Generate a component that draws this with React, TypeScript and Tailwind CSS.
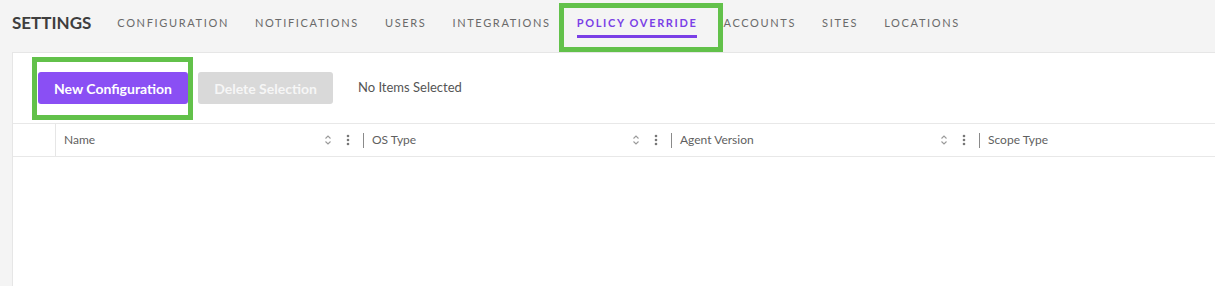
const tabs = [
  "CONFIGURATION",
  "NOTIFICATIONS",
  "USERS",
  "INTEGRATIONS",
  "POLICY OVERRIDE",
  "ACCOUNTS",
  "SITES",
  "LOCATIONS",
];

const columns = ["Name", "OS Type", "Agent Version", "Scope Type"];

const SortIcon = () => (
  <svg width="8" height="12" viewBox="0 0 8 12" fill="none">
    <path d="M1.5 4.5L4 2l2.5 2.5" stroke="#9a9a9a" strokeWidth="1.1" />
    <path d="M1.5 7.5L4 10l2.5-2.5" stroke="#9a9a9a" strokeWidth="1.1" />
  </svg>
);

const DotsIcon = () => (
  <svg width="4" height="12" viewBox="0 0 4 12">
    <circle cx="2" cy="2" r="1.3" fill="#777" />
    <circle cx="2" cy="6" r="1.3" fill="#777" />
    <circle cx="2" cy="10" r="1.3" fill="#777" />
  </svg>
);

const App = () => {
  return (
    <div className="w-screen h-screen overflow-hidden bg-[#f4f4f4] flex flex-col font-['Lato',sans-serif]">
      {/* top nav */}
      <div className="h-[52px] flex items-start pl-3 shrink-0">
        <p className="mt-[13px] text-[17px] leading-[20px] font-bold text-[#3e3e3e]">SETTINGS</p>
        <div className="flex gap-[26px] ml-[26px] mt-[16px]">
          {tabs.map((t) => {
            const active = t === "POLICY OVERRIDE";
            return (
              <div key={t} className="relative flex flex-col">
                <span
                  className={
                    active
                      ? "text-[11px] leading-[14px] tracking-[0.15em] font-bold text-[#7a3fe6] whitespace-nowrap"
                      : "text-[11px] leading-[14px] tracking-[0.15em] text-[#6a6a6a] whitespace-nowrap"
                  }
                >
                  {t}
                </span>
                <div className={active ? "mt-[5px] h-[3px] bg-[#7a3fe6]" : "mt-[5px] h-[3px]"} />
                {active && (
                  <div className="absolute -left-[18px] -right-[26px] -top-[13px] -bottom-[14px] border-[5px] border-[#62c14a]" />
                )}
              </div>
            );
          })}
        </div>
      </div>

      {/* panel */}
      <div className="flex-1 ml-3 w-[1290px] bg-white border-l border-t border-[#e6e6e6] flex flex-col">
        <div className="h-[71px] flex items-center pl-[25px] pr-[24px] border-b border-[#e8e8e8]">
          <div className="relative">
            <button className="h-8 w-[150px] rounded-[3px] bg-[#8a4ff4] text-white text-[14px] font-bold">
              New Configuration
            </button>
            <div className="absolute -left-[6px] -right-[5px] -top-[15px] -bottom-[16px] border-[5px] border-[#62c14a]" />
          </div>
          <button className="ml-[10px] h-8 w-[135px] rounded-[3px] bg-[#d9d9d9] text-[#f6f6f6] text-[14px] font-bold">
            Delete Selection
          </button>
          <span className="ml-[25px] text-[13px] text-[#555]">No Items Selected</span>
          <span className="ml-auto text-[14px] text-[#7a3fe6]">Columns</span>
        </div>

        <div className="h-[33px] flex items-stretch border-b border-[#e8e8e8]">
          <div className="w-[43px] border-r border-[#e6e6e6]" />
          {columns.map((c) => (
            <div key={c} className="w-[308px] flex items-center pl-2">
              <span className="flex-1 text-[12px] text-[#5f5f5f]">{c}</span>
              <SortIcon />
              <div className="ml-[14px] flex">
                <DotsIcon />
              </div>
              <div className="ml-[13px] w-px h-[15px] bg-[#8a8a8a]" />
            </div>
          ))}
        </div>
      </div>
    </div>
  );
};

export default App;
